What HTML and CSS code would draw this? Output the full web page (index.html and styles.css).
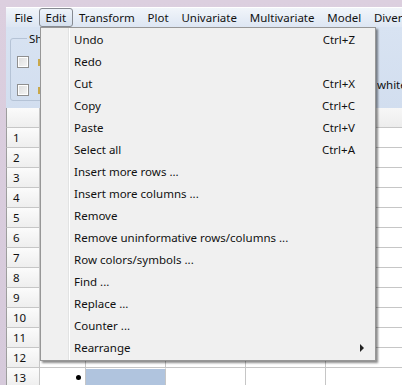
FILE: index.html
```html
<!DOCTYPE html>
<html lang="en">
<head>
  <meta charset="UTF-8" />
  <title>Edit menu</title>
  <link rel="stylesheet" href="styles.css">
</head>
<body>
  <div class="app">
    <!-- Barra de menú principal -->
    <nav class="menubar">
      <span class="menu-item">File</span>
      <span class="menu-item active">Edit</span>
      <span class="menu-item">Transform</span>
      <span class="menu-item">Plot</span>
      <span class="menu-item">Univariate</span>
      <span class="menu-item">Multivariate</span>
      <span class="menu-item">Model</span>
      <span class="menu-item">Diversity</span>
    </nav>

    <!-- Panel de opciones (queda casi todo bajo el menú) -->
    <section class="panel">
      <fieldset class="groupbox">
        <legend>Show</legend>
        <div class="check"><span class="box"></span><span class="tag"></span></div>
        <div class="check"><span class="box"></span><span class="tag"></span></div>
      </fieldset>
      <span class="bg-label">white</span>
    </section>

    <!-- Hoja de datos -->
    <div class="sheet">
      <div class="row head"><div class="rh"></div><div class="c"></div><div class="c"></div><div class="c"></div><div class="c"></div><div class="c"></div></div>
      <div class="row"><div class="rh">1</div><div class="c"></div><div class="c"></div><div class="c"></div><div class="c"></div><div class="c"></div></div>
      <div class="row"><div class="rh">2</div><div class="c"></div><div class="c"></div><div class="c"></div><div class="c"></div><div class="c"></div></div>
      <div class="row"><div class="rh">3</div><div class="c"></div><div class="c"></div><div class="c"></div><div class="c"></div><div class="c"></div></div>
      <div class="row"><div class="rh">4</div><div class="c"></div><div class="c"></div><div class="c"></div><div class="c"></div><div class="c"></div></div>
      <div class="row"><div class="rh">5</div><div class="c"></div><div class="c"></div><div class="c"></div><div class="c"></div><div class="c"></div></div>
      <div class="row"><div class="rh">6</div><div class="c"></div><div class="c"></div><div class="c"></div><div class="c"></div><div class="c"></div></div>
      <div class="row"><div class="rh">7</div><div class="c"></div><div class="c"></div><div class="c"></div><div class="c"></div><div class="c"></div></div>
      <div class="row"><div class="rh">8</div><div class="c"></div><div class="c"></div><div class="c"></div><div class="c"></div><div class="c"></div></div>
      <div class="row"><div class="rh">9</div><div class="c"></div><div class="c"></div><div class="c"></div><div class="c"></div><div class="c"></div></div>
      <div class="row"><div class="rh">10</div><div class="c"></div><div class="c"></div><div class="c"></div><div class="c"></div><div class="c"></div></div>
      <div class="row"><div class="rh">11</div><div class="c"></div><div class="c"></div><div class="c"></div><div class="c"></div><div class="c"></div></div>
      <div class="row"><div class="rh">12</div><div class="c"></div><div class="c"></div><div class="c"></div><div class="c"></div><div class="c"></div></div>
      <div class="row"><div class="rh">13</div><div class="c dot"><span class="marker"></span></div><div class="c selected"></div><div class="c"></div><div class="c"></div><div class="c"></div></div>
    </div>
  </div>

  <!-- Menú desplegable Edit -->
  <ul class="dropdown">
    <li>Undo<span class="key">Ctrl+Z</span></li>
    <li>Redo</li>
    <li>Cut<span class="key">Ctrl+X</span></li>
    <li>Copy<span class="key">Ctrl+C</span></li>
    <li>Paste<span class="key">Ctrl+V</span></li>
    <li>Select all<span class="key">Ctrl+A</span></li>
    <li>Insert more rows ...</li>
    <li>Insert more columns ...</li>
    <li>Remove</li>
    <li>Remove uninformative rows/columns ...</li>
    <li>Row colors/symbols ...</li>
    <li>Find ...</li>
    <li>Replace ...</li>
    <li>Counter ...</li>
    <li class="sub">Rearrange</li>
  </ul>
</body>
</html>
```

FILE: styles.css
```css
/* Reset básico */
*, *::before, *::after {
  box-sizing: border-box;
  margin: 0;
  padding: 0;
}

body {
  background: linear-gradient(#dccfdf, #d6cadb); /* marco de la ventana */
  font-family: "Noto Sans", "Liberation Sans", sans-serif;
  font-size: 11.5px;
  color: #111;
  padding: 7px 0 0 6px;
  overflow: hidden;
  height: 385px;
}

.app {
  width: 396px;
  height: 378px;
  overflow: hidden;
  background: #fff;
}

/* Barra de menú */
.menubar {
  display: flex;
  align-items: center;
  height: 20px;
  padding-left: 2px;
  background: linear-gradient(#f1f5fa, #dde6f3);
  border-top: 1px solid #fff;
  white-space: nowrap;
}
.menu-item {
  padding: 0 5.4px;
  line-height: 17px;
  border: 1px solid transparent;
}
.menu-item.active {
  border-color: #868a91;
  border-radius: 3px;
  background: linear-gradient(#eef3fa, #d5e0ee);
}

/* Panel de opciones */
.panel {
  display: flex;
  align-items: flex-start;
  justify-content: space-between;
  height: 81px;
  padding: 4px 0 0 4px;
  background: linear-gradient(#d8e3f2, #d2deef);
}
.groupbox {
  width: 120px;
  height: 70px;
  border: 1px solid #b5c3d6;
  border-radius: 3px;
  padding: 8px 0 0 6px;
  display: flex;
  flex-direction: column;
  gap: 12px;
}
.groupbox legend {
  margin-left: 10px;
  padding: 0 2px;
}
.check {
  display: flex;
  align-items: center;
  gap: 9px;
  height: 16px;
}
.check .box {
  width: 12px;
  height: 12px;
  border: 1px solid #8f8f8f;
  background: linear-gradient(135deg, #dcdcdc, #f6f6f6);
  box-shadow: inset 0 0 0 1px #fff;
}
/* etiqueta de color tapada por el menú: solo asoma su borde */
.check .tag {
  width: 3px;
  height: 7px;
  background: #c9a84a;
}
.bg-label {
  margin-top: 46px;
  width: 25px;
  overflow: hidden;
}

/* Hoja de datos */
.sheet {
  display: flex;
  flex-direction: column;
}
.row {
  display: grid;
  grid-template-columns: 34px 46px 80px 80px 80px 80px;
  height: 20px;
}
.row > div {
  border-bottom: 1px solid #c6c6c6;
  border-right: 1px solid #c6c6c6;
}
.row.head {
  background: linear-gradient(#f7f7f7, #ececec);
}
.rh {
  background: linear-gradient(#fbfbfb, #eeeeee);
  border-left: 1px solid #9d9d9d;
  padding-left: 6px;
  line-height: 19px;
}
.c.dot {
  display: flex;
  align-items: center;
  justify-content: flex-end;
  padding-right: 4px;
}
.marker {
  width: 5px;
  height: 5px;
  border-radius: 50%;
  background: #000;
}
.c.selected {
  background: #b0c4de;
  border-top: 1px solid #fff;
}

/* Menú desplegable */
.dropdown {
  position: absolute;
  left: 40px;
  top: 27px;
  width: 336px;
  list-style: none;
  padding: 1px 0;
  border: 1px solid #979797;
  background:
    linear-gradient(to right, transparent 27px, #e2e3e3 27px, #e2e3e3 28px, #fff 28px, #fff 29px, transparent 29px),
    #f0f0f0;
  box-shadow: 2px 2px 2px rgba(0, 0, 0, .45);
}
.dropdown li {
  position: relative;
  display: flex;
  justify-content: space-between;
  height: 22px;
  line-height: 22px;
  padding: 0 20px 0 33px;
}
.dropdown .sub::after {
  content: "";
  position: absolute;
  right: 11px;
  top: 7px;
  border-left: 4px solid #222;
  border-top: 4px solid transparent;
  border-bottom: 4px solid transparent;
}
```
